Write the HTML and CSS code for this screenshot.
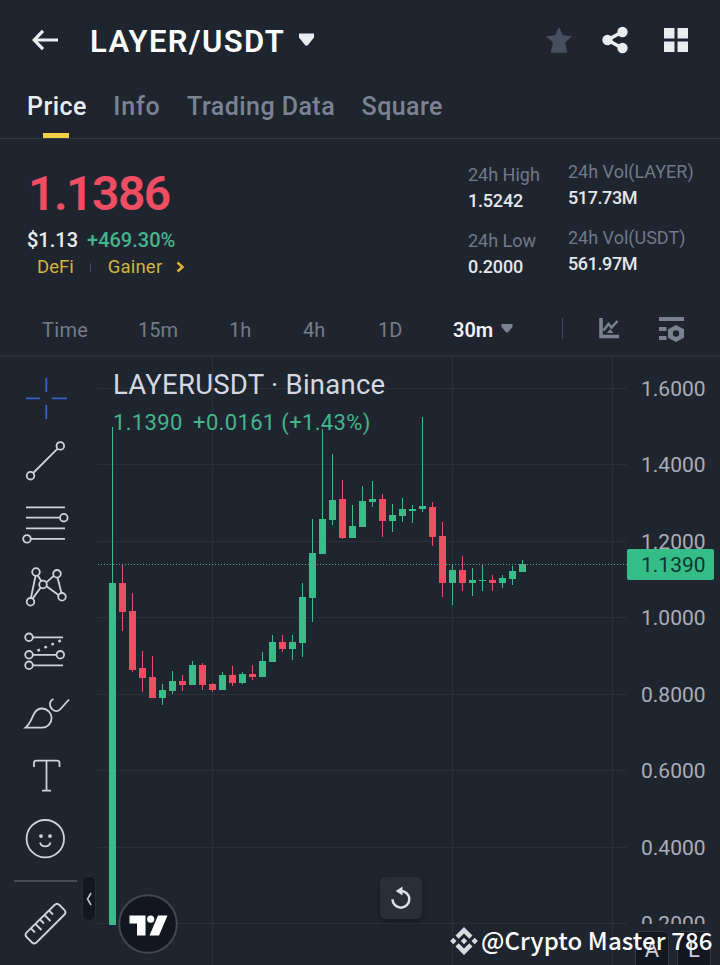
FILE: index.html
```html
<!DOCTYPE html>
<html lang="en">
<head>
    <meta charset="UTF-8">
    <meta name="viewport" content="width=device-width, initial-scale=1.0">
    <title>LAYER/USDT</title>
    <link rel="stylesheet" href="styles.css">
</head>
<body>
    <header class="topbar">
        <svg class="back" width="28" height="22" viewBox="0 0 28 22"><path d="M12 1.8L3.200 11l8.800 9.200M3.500 11H27" fill="none" stroke="#eaecef" stroke-width="3.200"/></svg>
        <h1>LAYER/USDT</h1>
        <svg class="caret" width="17" height="14" viewBox="0 0 17 14"><path d="M1 0.500h15v4L10 12q-1.500 1.500-3 0L1 4.500z" fill="#eaecef"/></svg>
        <div class="actions">
            <svg width="28" height="28" viewBox="0 0 28 28"><path d="M14 1l3.800 8.200 9.200 1.100-6.800 6.200 2.100 10.200H5.700l2.100-10.200L1 10.300l9.200-1.100z" fill="#474f5f"/></svg>
            <svg width="28" height="28" viewBox="0 0 28 28"><path d="M21 6L6.500 14 21 22" fill="none" stroke="#eaecef" stroke-width="3.500"/><g fill="#eaecef"><circle cx="21.500" cy="6" r="5.200"/><circle cx="6.500" cy="14" r="5.200"/><circle cx="21.500" cy="22" r="5.200"/></g></svg>
            <svg width="28" height="28" viewBox="0 0 28 28"><path d="M2 2h10.500v10.500H2zM15.500 2H26v10.500H15.500zM2 15.500h10.500V26H2zM15.500 15.500H26V26H15.500z" fill="#eaecef"/></svg>
        </div>
    </header>

    <nav class="tabs">
        <a class="tab active">Price</a>
        <a class="tab info">Info</a>
        <a class="tab">Trading Data</a>
        <a class="tab">Square</a>
    </nav>

    <section class="summary">
        <div class="quote">
            <div class="price">1.1386</div>
            <div class="change"><span class="fiat">$1.13</span><span class="up">+469.30%</span></div>
            <div class="tags">
                <span class="tag-defi">DeFi</span>
                <i class="tag-line"></i>
                <span class="tag-gainer">Gainer</span>
                <svg width="9" height="12" viewBox="0 0 9 12"><path d="M1.500 1.500L6.500 6l-5 4.500" fill="none" stroke="#e0b530" stroke-width="2.500"/></svg>
            </div>
        </div>
        <dl class="stats">
            <dt>24h High</dt><dd>1.5242</dd>
            <dt>24h Low</dt><dd>0.2000</dd>
        </dl>
        <dl class="stats volume">
            <dt>24h Vol(LAYER)</dt><dd>517.73M</dd>
            <dt>24h Vol(USDT)</dt><dd>561.97M</dd>
        </dl>
    </section>

    <div class="intervals">
        <span class="i-time">Time</span>
        <span class="i-15m">15m</span>
        <span class="i-1h">1h</span>
        <span class="i-4h">4h</span>
        <span class="i-1d">1D</span>
        <span class="i-30m">30m</span>
        <svg class="small-caret" width="12" height="9" viewBox="0 0 12 9"><path d="M0.500 0h11v3L7.200 8q-1.200 1-2.400 0L0.500 3z" fill="#7a8190"/></svg>
        <i class="split"></i>
        <svg class="indicator" width="20" height="21" viewBox="0 0 20 21"><path d="M2 0v18.500h18" fill="none" stroke="#7a8190" stroke-width="3.600"/><path d="M4.500 12.500L9.500 6l3 3.500L18.500 3" fill="none" stroke="#7a8190" stroke-width="2.500"/><path d="M8 15l3-4 3.500 4z" fill="#7a8190"/></svg>
        <svg class="settings" width="25" height="26" viewBox="0 0 25 26"><path d="M0 1h25v4H0zM0 11h7.500v4H0zM0 20h7.500v4H0z" fill="#7a8190"/><path fill-rule="evenodd" d="M17 9l8 4.300v8.400L17 26l-8-4.300v-8.400zM17 14.300a3.200 3.200 0 1 0 0 6.400 3.200 3.200 0 1 0 0-6.400z" fill="#7a8190"/></svg>
    </div>

    <main class="chart">
        <div class="tools">
            <svg class="tool cross" viewBox="0 0 48 48"><path d="M4 24.300H18M30 24.300H45M24.300 4V18M24.300 31V45"/></svg>
            <svg class="tool" viewBox="0 0 48 48"><path d="M11.200 36L35.600 11.600"/><circle cx="38.300" cy="8.900" r="3.800"/><circle cx="8.500" cy="38.700" r="3.800"/></svg>
            <svg class="tool" viewBox="0 0 48 48"><path d="M4 7.400H43M4 17.700H38M4 28.400H43M9 38.900H43"/><circle cx="41.800" cy="17.700" r="3.800"/><circle cx="5" cy="38.900" r="3.800"/></svg>
            <svg class="tool" viewBox="0 0 48 48"><path d="M13.600 12.800L8.900 35M15.700 12.400l3.600 5.700M10.600 35.600l8-11M24.300 19.400l7.500-6.500M35.500 14.600l4 15.400M24.500 23.300l12 8.600"/><circle cx="14" cy="9" r="3.800"/><circle cx="35" cy="10.800" r="3.800"/><circle cx="21" cy="21.500" r="3.800"/><circle cx="8.500" cy="38.800" r="3.800"/><circle cx="40" cy="33.800" r="3.800"/></svg>
            <svg class="tool" viewBox="0 0 48 48"><path d="M11 11.300H41M11 28.800H34M11 39.300H41"/><path d="M15.500 24.700L40 14" stroke-width="2.600" stroke-dasharray="2.600 5"/><circle cx="7" cy="11.300" r="3.800"/><circle cx="7" cy="28.800" r="3.800"/><circle cx="38.300" cy="28.800" r="3.800"/><circle cx="7" cy="39.300" r="3.800"/></svg>
            <svg class="tool" viewBox="0 0 48 48"><path d="M3.500 39.700C9 35 9.500 30 12.500 25c1.800-3 4.500-4.500 7.500-4.500a9.600 9.600 0 0 1 0 19.200zM31.500 11c-4.500 2-4.500 7-1.500 10 2.500 3 6.500 2.500 8.500 0L47 11.500"/></svg>
            <svg class="tool" viewBox="0 0 48 48"><path d="M12 16v-4q0-2.300 2.500-2.300h20.500q2.500 0 2.500 2.300v4M24.500 9.700V39.700M20 39.700H29"/></svg>
            <svg class="tool" viewBox="0 0 48 48"><circle cx="23.300" cy="24.700" r="18.700"/><path d="M18 28.500c1.500 5.200 9 5.200 10.500 0"/><g class="eyes"><circle cx="19" cy="22.100" r="1.900"/><circle cx="28" cy="22.100" r="1.900"/></g></svg>
            <i class="tool-line"></i>
            <svg class="tool ruler" viewBox="0 0 48 48"><path d="M32.500 6q2.500-2.500 5 0l5 5q2 2.500 0 4.500L14.500 43.500q-2.500 2-4.500 0l-5.500-5.500q-2-2 0-4.500zM9 29.500l4 4M13.500 25l6 6M18 20.500l4 4M22.500 16l6 6M27 11.500l4 4"/></svg>
        </div>

        <div class="plot">
            <svg id="plot" width="622" height="608" viewBox="98 357 622 608"></svg>
            <div class="legend">
                <div class="legend-title">LAYERUSDT · Binance</div>
                <div class="legend-value"><span>1.1390</span><span>+0.0161 (+1.43%)</span></div>
            </div>
            <div class="last-price">1.1390</div>
            <div class="scale-buttons"><b>A</b><b>L</b></div>
            <svg class="tv-logo" width="60" height="60" viewBox="0 0 60 60"><circle cx="30" cy="30" r="28.800" fill="#131620" stroke="#44474f" stroke-width="2"/><path d="M11.500 21.500h16v20H19v-12h-7.500zM40 21.500h9.500l-8.500 20h-9.500z" fill="#fff"/><circle cx="32.700" cy="25.200" r="3.600" fill="#fff"/></svg>
            <div class="reset"><svg width="24" height="26" viewBox="0 0 24 26"><path d="M3.500 14.300a8.400 8.400 0 1 0 8.400-8.400H10" fill="none" stroke="#dcdfe8" stroke-width="2.500"/><path d="M6.700 6l6.800-4.500v9z" fill="#dcdfe8"/></svg></div>
        </div>
        <div class="collapse"><svg width="7" height="14" viewBox="0 0 7 14"><path d="M5 1L1.500 7 5 13" fill="none" stroke="#c9ccd5" stroke-width="1.500"/></svg></div>
        <div class="watermark">
            <svg width="28" height="28" viewBox="0 0 28 28"><g fill="#d9dadc"><path d="M14 0l8.500 8.500-3.200 3.200L14 6.400l-5.300 5.300-3.200-3.200zM14 28l8.500-8.500-3.200-3.200L14 21.600l-5.300-5.300-3.200 3.200zM14 10.800l3.200 3.200-3.200 3.200-3.200-3.200zM3.300 10.800L6.500 14l-3.200 3.200L.1 14zM24.700 10.800l3.200 3.200-3.200 3.200-3.200-3.200z"/></g></svg>
            <span>@Crypto Master 786</span>
        </div>
    </main>

    <script src="chart.js"></script>
</body>
</html>
```
FILE: styles.css
```css
* {
    box-sizing: border-box;
}

body {
    margin: 0;
    width: 720px;
    height: 965px;
    overflow: hidden;
    background-color: #1f252f;
    color: #eaecef;
    font-family: Roboto, "Liberation Sans", sans-serif;
}

svg {
    display: block;
    flex: none;
}

/* header */
.topbar {
    display: flex;
    align-items: center;
    height: 81px;
    padding: 1px 30px 0 31px;
}

.back {
    margin-bottom: 3px;
}

h1 {
    margin: 1px 0 0 31px;
    width: 194px;
    font-size: 31px;
    font-weight: 600;
    letter-spacing: 1.35px;
    white-space: nowrap;
    color: #fff;
}

.caret {
    margin-left: 14px;
    margin-bottom: 2px;
}

.actions {
    display: flex;
    gap: 28px;
    margin-left: auto;
    margin-bottom: 3px;
}

.actions svg:last-child {
    margin-left: 5px;
}

.tabs {
    display: flex;
    height: 58px;
    padding-left: 27px;
    border-bottom: 1px solid #343a44;
}

.tab {
    position: relative;
    height: 50px;
    margin-right: 26.5px;
    line-height: 51px;
    font-size: 25px;
    font-weight: 500;
    letter-spacing: 0.45px;
    color: #7b8291;
}

.info {
    letter-spacing: 0.8px;
}

.active {
    color: #eaecef;
}

.active::after {
    content: "";
    position: absolute;
    left: 16px;
    top: 52px;
    width: 26px;
    height: 5px;
    background-color: #f3d04a;
}

/* price and 24h numbers */
.summary {
    display: flex;
    height: 151px;
}

.quote {
    width: 468px;
    padding: 28px 0 0 27px;
}

.price {
    height: 54px;
    padding-left: 1px;
    line-height: 54px;
    font-size: 48px;
    font-weight: 600;
    letter-spacing: -1.5px;
    color: #ee4d62;
}

.change {
    display: flex;
    gap: 9px;
    height: 38px;
    line-height: 38px;
    font-size: 20px;
    font-weight: 500;
}

.up {
    color: #46b48b;
}

.tags {
    display: flex;
    align-items: center;
    height: 16px;
    padding-left: 10px;
    font-size: 18.5px;
    color: #d8b23a;
}

.tag-line {
    width: 1px;
    height: 9px;
    margin: 0 17px 0 16px;
    background-color: #414753;
}

.tag-gainer {
    letter-spacing: 0.2px;
}

.tags svg {
    margin-left: 14px;
}

.stats {
    width: 100px;
    margin: 0;
    padding-top: 23px;
    font-size: 18px;
    white-space: nowrap;
}

.volume {
    padding-top: 20px;
}

.stats dt {
    height: 26px;
    line-height: 26px;
    color: #717887;
}

.stats dd {
    height: 26px;
    margin: 0 0 14px;
    line-height: 26px;
    font-weight: 500;
    letter-spacing: -0.2px;
    color: #e4e7ec;
}

.volume dd {
    letter-spacing: -0.4px;
}

/* interval bar */
.intervals {
    display: flex;
    align-items: center;
    height: 67px;
    padding: 14px 0 0 42px;
    border-bottom: 2px solid #292f39;
    font-size: 20px;
    color: #747b89;
}

.i-time { width: 96px; letter-spacing: 0.3px; }
.i-15m { width: 91px; }
.i-1h { width: 74px; }
.i-4h { width: 75px; }
.i-1d { width: 75px; }

.i-30m {
    width: 48px;
    font-weight: 600;
    color: #f2f3f5;
}

.small-caret {
    margin-bottom: 3px;
}

.split {
    width: 1px;
    height: 21px;
    margin: 0 36px 2px 49px;
    background-color: #444a56;
}

.indicator {
    margin-bottom: 3px;
}

.settings {
    margin: 0 0 1px 40px;
}

/* chart */
.chart {
    position: relative;
    display: flex;
    height: 608px;
}

.tools {
    display: flex;
    flex-direction: column;
    width: 98px;
    padding: 10px 0 0 22px;
}

.tool {
    width: 48px;
    height: 48px;
    margin: 7.4px 0;
    overflow: visible;
    fill: none;
    stroke: #ced2dc;
    stroke-width: 1.8;
}

.cross {
    stroke: #3960c8;
}

.eyes {
    fill: #ced2dc;
    stroke: none;
}

.tool-line {
    width: 63px;
    height: 2px;
    margin: 11px 0 9px -8px;
    background-color: #454a55;
}

.plot {
    position: relative;
    width: 622px;
}

.legend {
    position: absolute;
    left: 15px;
    top: 10px;
}

.legend-title {
    line-height: 36px;
    font-size: 27.5px;
    letter-spacing: 0.26px;
    color: #d5d8e0;
}

.legend-value {
    display: flex;
    gap: 10.5px;
    line-height: 40px;
    font-size: 22px;
    letter-spacing: 0.33px;
    color: #43b58b;
}

.axis {
    font-size: 21px;
    fill: #a9adb8;
}

.last-price {
    position: absolute;
    left: 529px;
    top: 192px;
    width: 87px;
    height: 31px;
    padding-left: 14px;
    border-radius: 2px;
    line-height: 32px;
    font-size: 21px;
    color: #10352c;
    background-color: #34bd87;
}

.scale-buttons {
    position: absolute;
    left: 537px;
    top: 574px;
    display: flex;
    gap: 8px;
}

.scale-buttons b {
    width: 34px;
    height: 40px;
    border: 1px solid #343943;
    border-radius: 5px;
    line-height: 36px;
    text-align: center;
    font-size: 22px;
    font-weight: 400;
    color: #c9ccda;
    background-color: #131722;
}

.tv-logo {
    position: absolute;
    left: 20px;
    top: 537px;
}

.reset {
    position: absolute;
    left: 282px;
    top: 520px;
    display: flex;
    align-items: center;
    justify-content: center;
    width: 42px;
    height: 42px;
    border-radius: 5px;
    background-color: #2a2e39;
    box-shadow: 0 2px 5px rgba(0, 0, 0, 0.4);
}

.collapse {
    position: absolute;
    left: 82px;
    top: 519px;
    display: flex;
    align-items: center;
    justify-content: center;
    width: 14px;
    height: 45px;
    border-radius: 6px;
    border: 1px solid #272c36;
    background-color: #131722;
}

.watermark {
    position: absolute;
    left: 450px;
    top: 569px;
    display: flex;
    align-items: center;
    gap: 3px;
    height: 30px;
    font-family: "Noto Sans CJK SC", sans-serif;
    font-size: 24px;
    font-weight: 500;
    letter-spacing: 0.1px;
    white-space: nowrap;
    color: #fff;
}

.watermark span {
    margin-top: -4px;
}
```
FILE: chart.js
```js
const svg = document.getElementById('plot');
const UP = '#3cba88';
const DOWN = '#ee4d62';

// direction, high, body top, body bottom, low
const candles = [
    [1, 427, 583, 925, 925], [0, 565, 583, 612, 631], [0, 593, 611, 670, 672],
    [0, 651, 668, 678, 692], [0, 656, 677, 698, 698], [1, 684, 690, 698, 705],
    [1, 671, 681, 691, 694], [0, 675, 681, 685, 691], [1, 661, 665, 685, 685],
    [0, 663, 665, 685, 690], [0, 683, 684, 690, 692], [1, 672, 675, 690, 690],
    [0, 666, 675, 683, 686], [1, 672, 674, 683, 684], [0, 665, 674, 677, 680],
    [1, 652, 661, 677, 677], [1, 635, 642, 662, 662], [0, 635, 642, 649, 652],
    [1, 635, 642, 649, 660], [1, 583, 597, 643, 657], [1, 519, 553, 598, 622],
    [1, 429, 519, 554, 554], [1, 454, 500, 520, 525], [0, 480, 499, 538, 539],
    [1, 505, 526, 538, 538], [1, 486, 501, 527, 527], [1, 481, 499, 502, 507],
    [0, 494, 499, 521, 537], [1, 504, 515, 521, 532], [1, 498, 509, 516, 522],
    [1, 505, 509, 511, 523], [1, 417, 506, 509, 512], [0, 502, 507, 537, 546],
    [0, 522, 536, 583, 597], [1, 564, 570, 583, 605], [0, 556, 570, 583, 591],
    [1, 568, 580, 583, 596], [1, 564, 580, 581, 591], [0, 575, 580, 583, 591],
    [1, 575, 578, 583, 588], [1, 566, 571, 579, 585], [1, 560, 564, 572, 572]
];

const labels = ['1.6000', '1.4000', '1.2000', '1.0000', '0.8000', '0.6000', '0.4000', '0.2000'];

let out = '<clipPath id="above"><rect x="98" y="357" width="622" height="567"/></clipPath>';

// grid and price scale
for (let i = 0; i < labels.length; i++) {
    const y = 388 + i * 76.5;
    out += `<rect x="98" y="${Math.floor(y)}" width="529" height="1" fill="#2a303a"/>`;
    out += `<text class="axis" x="641" y="${Math.floor(y) + 8}" clip-path="url(#above)">${labels[i]}</text>`;
}
for (const x of [212, 452, 612]) {
    out += `<rect x="${x}" y="357" width="1" height="608" fill="#2a303a"/>`;
}

candles.forEach(([up, high, top, bottom, low], i) => {
    const x = 112 + i * 10;
    const color = up ? UP : DOWN;
    out += `<rect x="${x}" y="${high}" width="1" height="${low - high}" fill="${color}"/>`;
    out += `<rect x="${x - 3}" y="${top}" width="7" height="${bottom - top}" fill="${color}"/>`;
});

// last price line
out += '<path d="M98 564.5H627" stroke="#4aa98a" stroke-width="1" stroke-dasharray="1 2"/>';

svg.innerHTML = out;
```
